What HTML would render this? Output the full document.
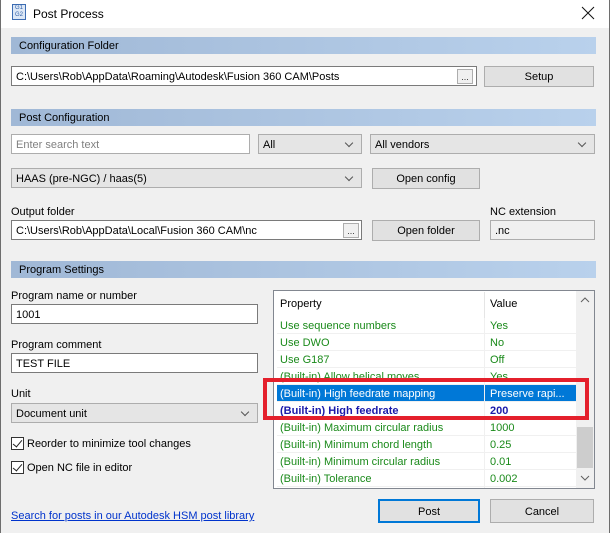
<!DOCTYPE html>
<html><head><meta charset="utf-8"><style>
*{box-sizing:border-box;margin:0;padding:0}
body{width:610px;height:533px;background:#f0f0f0;font-family:"Liberation Sans",sans-serif;font-size:11px;color:#000;position:relative;overflow:hidden}
.a{position:absolute;white-space:nowrap}
.title{left:0;top:0;width:610px;height:28px;background:#fff}
.hdr{position:absolute;left:11px;width:585px;height:17px;background:linear-gradient(90deg,#a0b8d6,#b9d1ec);padding:3px 0 0 8px}
.inp{position:absolute;background:#fff;border:1px solid #7a7a7a;height:20px;padding:4px 0 0 4px;white-space:nowrap;overflow:hidden}
.cmb{position:absolute;background:#e5e5e5;border:1px solid #adadad;height:20px;padding:4px 0 0 4px;white-space:nowrap}
.cmb:after{content:"";position:absolute;right:9px;top:5px;width:5px;height:5px;border-right:1px solid #555;border-bottom:1px solid #555;transform:rotate(45deg)}
.btn{position:absolute;background:#e1e1e1;border:1px solid #adadad;height:21px;text-align:center;padding-top:4px}
.dots{position:absolute;background:#f0f0f0;border:1px solid #adadad;width:16px;height:15px;font-size:9px;text-align:center;line-height:15px;color:#333}
.row{position:absolute;left:277px;width:299px;height:17px;color:#1a8a1a;border-bottom:1px solid #f0f0f0}
.row span{position:absolute;top:3px}
.row .p{left:3px}.row .v{left:213px}
.chk{position:absolute;left:11px;width:13px;height:13px;border:1px solid #333;background:#fff}
.chk:after{content:"";position:absolute;left:3px;top:0px;width:4px;height:8px;border-right:1.5px solid #222;border-bottom:1.5px solid #222;transform:rotate(40deg)}
</style></head><body>
<div class="a title"></div>
<div class="a" style="left:0;top:0;width:1px;height:533px;background:#6e6e6e"></div>
<div class="a" style="left:609px;top:0;width:1px;height:533px;background:#6e6e6e"></div>
<div class="a" style="left:12px;top:4px;width:14px;height:16px;border:1px solid #3d6db3;background:#dde8f6;font-size:6px;line-height:7px;color:#2f5fa8;text-align:center">G1<br>G2</div>
<div class="a" style="left:33px;top:7px;font-size:12px">Post Process</div>
<svg class="a" style="left:581px;top:6px" width="14" height="14"><path d="M1 1L13 13M13 1L1 13" stroke="#111" stroke-width="1"/></svg>

<div class="hdr" style="top:37px">Configuration Folder</div>
<div class="inp" style="left:11px;top:66px;width:466px">C:\Users\Rob\AppData\Roaming\Autodesk\Fusion 360 CAM\Posts</div>
<div class="dots" style="left:457px;top:69px">...</div>
<div class="btn" style="left:484px;top:66px;width:110px">Setup</div>

<div class="hdr" style="top:109px">Post Configuration</div>
<div class="inp" style="left:11px;top:134px;width:239px;color:#808080;border-color:#adadad">Enter search text</div>
<div class="cmb" style="left:258px;top:134px;width:104px">All</div>
<div class="cmb" style="left:370px;top:134px;width:225px">All vendors</div>
<div class="cmb" style="left:11px;top:168px;width:351px">HAAS (pre-NGC) / haas(5)</div>
<div class="btn" style="left:372px;top:168px;width:108px">Open config</div>
<div class="a" style="left:11px;top:206px">Output folder</div>
<div class="a" style="left:490px;top:206px">NC extension</div>
<div class="inp" style="left:11px;top:220px;width:351px">C:\Users\Rob\AppData\Local\Fusion 360 CAM\nc</div>
<div class="dots" style="left:343px;top:223px">...</div>
<div class="btn" style="left:372px;top:220px;width:108px">Open folder</div>
<div class="inp" style="left:490px;top:220px;width:105px;background:#f0f0f0;border-color:#adadad">.nc</div>

<div class="hdr" style="top:261px">Program Settings</div>
<div class="a" style="left:11px;top:290px">Program name or number</div>
<div class="inp" style="left:11px;top:304px;width:247px">1001</div>
<div class="a" style="left:11px;top:339px">Program comment</div>
<div class="inp" style="left:11px;top:353px;width:247px">TEST FILE</div>
<div class="a" style="left:11px;top:388px">Unit</div>
<div class="cmb" style="left:11px;top:403px;width:247px">Document unit</div>
<div class="chk" style="top:437px"></div><div class="a" style="left:27px;top:438px">Reorder to minimize tool changes</div>
<div class="chk" style="top:461px"></div><div class="a" style="left:27px;top:462px">Open NC file in editor</div>
<div class="a" style="left:11px;top:510px;color:#0033cc;text-decoration:underline">Search for posts in our Autodesk HSM post library</div>

<div class="a" style="left:273px;top:290px;width:322px;height:199px;background:#fff;border:1px solid #828790"></div>
<div class="a" style="left:280px;top:298px">Property</div>
<div class="a" style="left:484px;top:292px;width:1px;height:26px;background:#e5e5e5"></div>
<div class="a" style="left:490px;top:298px">Value</div>
<div class="a" style="left:576px;top:291px;width:18px;height:197px;background:#f0f0f0"></div>
<div class="a" style="left:577px;top:427px;width:16px;height:41px;background:#cdcdcd"></div>
<svg class="a" style="left:580px;top:297px" width="10" height="6"><path d="M1 5L5 1L9 5" stroke="#606060" fill="none"/></svg>
<svg class="a" style="left:580px;top:475px" width="10" height="6"><path d="M1 1L5 5L9 1" stroke="#606060" fill="none"/></svg>

<div class="row" style="top:317px"><span class="p">Use sequence numbers</span><span class="v">Yes</span></div>
<div class="row" style="top:334px"><span class="p">Use DWO</span><span class="v">No</span></div>
<div class="row" style="top:351px"><span class="p">Use G187</span><span class="v">Off</span></div>
<div class="row" style="top:368px"><span class="p">(Built-in) Allow helical moves</span><span class="v">Yes</span></div>
<div class="row" style="top:385px;background:#0078d7;color:#fff"><span class="p">(Built-in) High feedrate mapping</span><span class="v">Preserve rapi...</span></div>
<div class="a" style="left:484px;top:385px;width:1px;height:17px;background:#fff"></div>
<div class="row" style="top:402px;color:#1a1aaa;font-weight:bold"><span class="p">(Built-in) High feedrate</span><span class="v">200</span></div>
<div class="row" style="top:419px"><span class="p">(Built-in) Maximum circular radius</span><span class="v">1000</span></div>
<div class="row" style="top:436px"><span class="p">(Built-in) Minimum chord length</span><span class="v">0.25</span></div>
<div class="row" style="top:453px"><span class="p">(Built-in) Minimum circular radius</span><span class="v">0.01</span></div>
<div class="row" style="top:470px"><span class="p">(Built-in) Tolerance</span><span class="v">0.002</span></div>
<div class="a" style="left:484px;top:318px;width:1px;height:170px;background:#f0f0f0"></div>

<div class="a" style="left:263px;top:378px;width:326px;height:42px;border:4px solid #e4202c"></div>

<div class="btn" style="left:378px;top:499px;width:102px;height:24px;border:2px solid #0078d7;padding-top:5px">Post</div>
<div class="btn" style="left:490px;top:499px;width:104px;height:24px;padding-top:6px">Cancel</div>
</body></html>
